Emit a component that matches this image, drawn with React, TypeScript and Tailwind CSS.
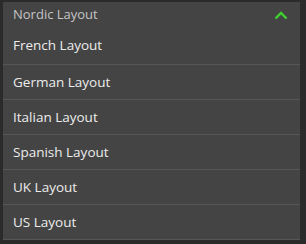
const layouts = ["French Layout", "German Layout", "Italian Layout", "Spanish Layout", "UK Layout", "US Layout"];

export default function App() {
  return (
    <div className="w-[306px] h-[244px] bg-[#2b2b2b] pt-[2px] pl-[3px] font-['Open_Sans',sans-serif]">
      <div className="w-[297px] bg-[#444444] border-b border-[#575757]">
        <div className="flex items-center justify-between h-[25px] pl-[10px] pr-[12px]">
          <span className="text-[13px] text-[#c4c4c4] leading-none">Nordic Layout</span>
          <svg width="14" height="9" viewBox="0 0 14 9" className="mt-[2px]">
            <path d="M1.5 7.5 L7 2 L12.5 7.5" fill="none" stroke="#3fd22f" strokeWidth="2.4" />
          </svg>
        </div>
        {layouts.map((l, i) => (
          <div
            key={l}
            className={
              i === 0
                ? "h-[37px] flex items-center pl-[10px] text-[13.5px] text-[#ececec]"
                : "h-[35px] flex items-center pl-[10px] text-[13.5px] text-[#ececec] border-t border-[#575757]"
            }
          >
            {l}
          </div>
        ))}
      </div>
    </div>
  );
}
